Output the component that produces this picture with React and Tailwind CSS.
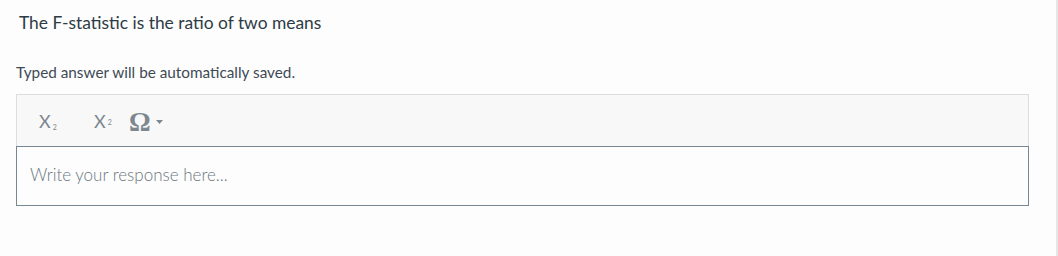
const App = () => {
  return (
    <div className="w-[1058px] h-[256px] flex bg-[#fdfdfd]" style={{ fontFamily: 'Lato, "Noto Sans", sans-serif' }}>
      <div className="flex-1 pl-4 pr-[27px] pt-[12px]">
        <p className="pl-[3px] text-[17.4px] leading-[22px] text-[#2d3b45]">The F-statistic is the ratio of two means</p>
        <p className="mt-[28px] text-[15.3px] leading-[20px] text-[#3d4a55]">Typed answer will be automatically saved.</p>

        <div className="mt-[12px] border border-[#dcdde0] border-b-0 bg-[#f8f8f8] h-[52px] flex items-center pl-[22px] text-[#7d8790]">
          <span className="shrink-0 text-[18px] leading-none w-[55px]">X<sub className="text-[7px] ml-[2px] relative top-[2px]">2</sub></span>
          <span className="shrink-0 text-[18px] leading-none w-[35px]">X<sup className="text-[7px] ml-[2px] relative top-[-3px]">2</sup></span>
          <span className="flex items-center gap-[5px] pt-[3px]">
            <span className="text-[27px] leading-none font-bold" style={{ fontFamily: '"Liberation Serif", serif' }}>Ω</span>
            <svg width="7" height="4" viewBox="0 0 7 4"><path d="M0 0h7L3.5 4z" fill="#7d8790" /></svg>
          </span>
        </div>
        <div className="border border-[#7a8791] h-[60px] px-[13px] pt-[18px] text-[17px] leading-[20px] text-[#6b7680] font-light">
          Write your response here...
        </div>
      </div>
      <div className="w-[2px] bg-[#e6e6e6]" />
    </div>
  )
}

export default App
